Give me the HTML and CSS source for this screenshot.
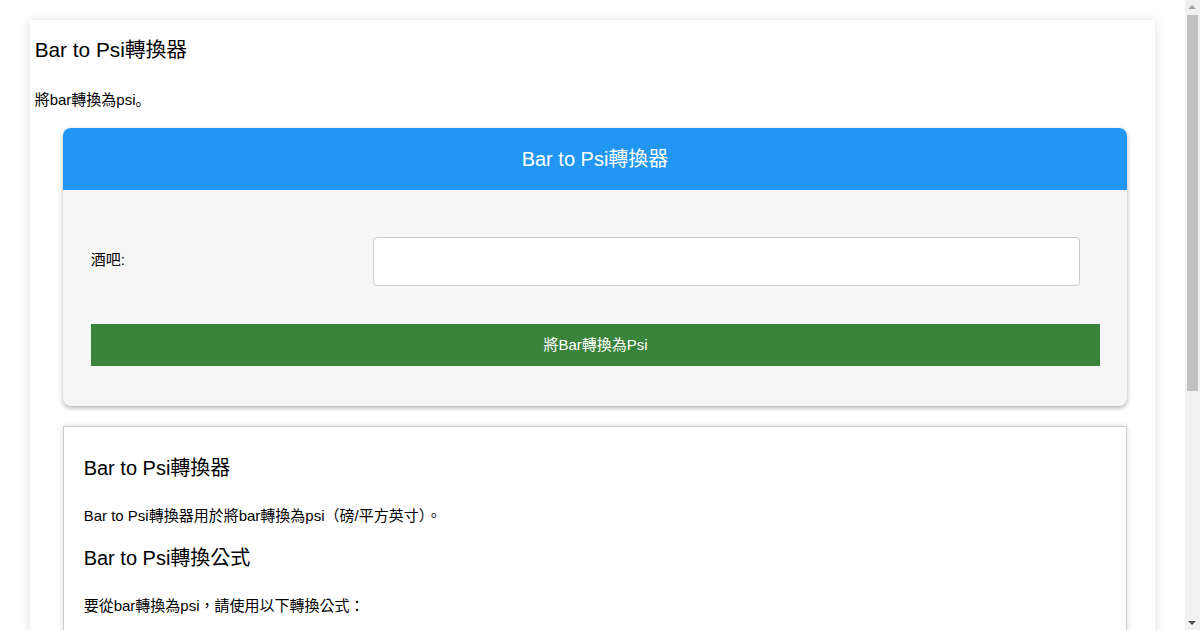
FILE: index.html
```html
<!DOCTYPE html>
<html lang="zh-Hant">
<head>
<meta charset="utf-8">
<title>Bar to Psi轉換器</title>
<link rel="stylesheet" href="styles.css">
</head>
<body>
  <div class="page">
    <h1 class="page-title">Bar to Psi轉換器</h1>
    <p class="lead">將bar轉換為psi。</p>

    <div class="converter">
      <div class="converter-head">Bar to Psi轉換器</div>
      <div class="converter-body">
        <div class="field-row">
          <label class="field-label" for="bar">酒吧:</label>
          <input class="field-input" id="bar" type="text">
        </div>
        <button class="convert-btn">將Bar轉換為Psi</button>
      </div>
    </div>

    <div class="article">
      <h2>Bar to Psi轉換器</h2>
      <p>Bar to Psi轉換器用於將bar轉換為psi（磅/平方英寸）。</p>
      <h2>Bar to Psi轉換公式</h2>
      <p>要從bar轉換為psi，請使用以下轉換公式：</p>
      <p class="formula">psi = bar × 14.5038</p>
      <h2>範例</h2>
      <p>將5 bar轉換為psi：</p>
      <p class="formula">5 bar × 14.5038 = 72.519 psi</p>
      <p>因此，5 bar等於72.519 psi。</p>
    </div>
  </div>

  <!-- window scrollbar, as it shows in the screenshot -->
  <div class="scrollbar">
    <span class="scroll-arrow up"></span>
    <span class="scroll-thumb"></span>
    <span class="scroll-arrow down"></span>
  </div>
</body>
</html>
```

FILE: styles.css
```css
/* page frame */
html {
  overflow: hidden;
}

body {
  margin: 0 15px 0 0;
  font-family: "Liberation Sans", "Noto Sans CJK JP", sans-serif;
  color: #000;
  background: #fff;
}

.page {
  width: 95%;
  margin: 20px auto;
  padding: 5px 0 20px 5px;
  box-sizing: border-box;
  background: #fff;
  box-shadow: 0 0 10px rgba(0, 0, 0, 0.12);
}

.page-title {
  font-size: 20.8px;
  font-weight: normal;
  line-height: 25px;
  margin: 12px 0 29px;
}

.lead {
  font-size: 15px;
  line-height: 18px;
  margin: 0 0 19px;
}

/* converter card */
.converter {
  width: 95%;
  margin: 0 auto;
  border-radius: 8px;
  overflow: hidden;
  background: #f6f6f6;
  box-shadow: 0 2px 5px rgba(0, 0, 0, 0.3);
}

.converter-head {
  background: #2196f3;
  color: #fff;
  text-align: center;
  font-size: 20px;
  line-height: 24px;
  padding: 19px;
}

.converter-body {
  padding: 47px 27px 40px 28px;
}

.field-row {
  display: flex;
  align-items: center;
  margin-bottom: 38px;
}

.field-label {
  flex: 0 0 28%;
  font-size: 15px;
  padding-bottom: 6px;
}

.field-input {
  width: 70%;
  height: 49px;
  box-sizing: border-box;
  border: 1px solid #ccc;
  border-radius: 4px;
  background: #fff;
  font-size: 15px;
  padding: 0 10px;
}

.convert-btn {
  display: block;
  width: 100%;
  height: 42px;
  padding: 0 0 4px;
  border: none;
  background: #3a833a;
  color: #fff;
  font-family: inherit;
  font-size: 15px;
  cursor: pointer;
}

/* text card */
.article {
  width: 95%;
  margin: 20px auto 0;
  padding: 21px 20px 20px;
  box-sizing: border-box;
  border: 1px solid #ccc;
  background: #fff;
  box-shadow: 0 0 6px rgba(0, 0, 0, 0.15);
}

.article h2 {
  font-size: 20px;
  font-weight: normal;
  line-height: 24px;
  margin: 8px 0 27px;
}

.article p {
  font-size: 15px;
  line-height: 18px;
  margin: 0 0 21px;
}

.article .formula {
  font-weight: bold;
}

/* fake window scrollbar */
.scrollbar {
  position: fixed;
  top: 0;
  right: 0;
  width: 15px;
  height: 100%;
  background: #f1f1f1;
}

.scroll-thumb {
  position: absolute;
  left: 2px;
  right: 2px;
  top: 15px;
  height: 376px;
  background: #c1c1c1;
}

.scroll-arrow {
  position: absolute;
  left: 3px;
  width: 0;
  height: 0;
  border-left: 4.5px solid transparent;
  border-right: 4.5px solid transparent;
}

.scroll-arrow.up {
  top: 5px;
  border-bottom: 4px solid #a3a3a3;
}

.scroll-arrow.down {
  bottom: 5px;
  border-top: 4px solid #505050;
}
```
